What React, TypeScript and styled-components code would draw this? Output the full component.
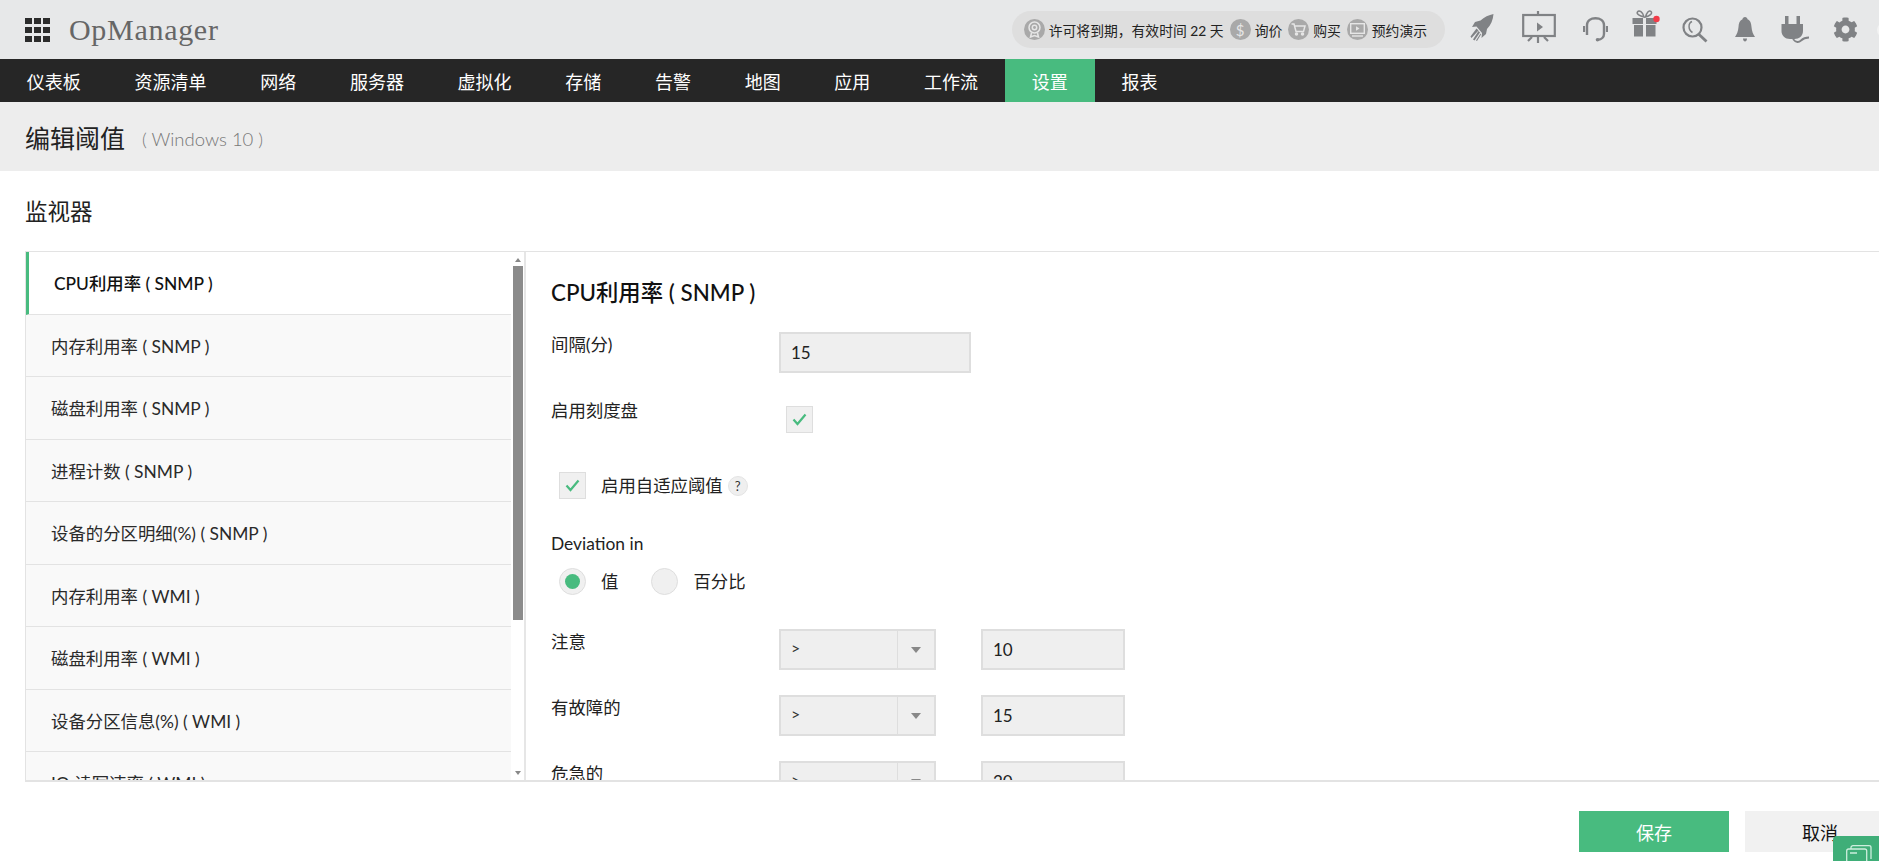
import React from 'react';
import styled, {createGlobalStyle} from 'styled-components';
import {FaCog} from 'react-icons/fa';

const GlobalStyle = createGlobalStyle`
  html, body {
    margin: 0;
    height: 100%;
    background: #fff;
    font-family: Lato, "Noto Sans CJK SC", sans-serif;
    color: #222;
  }
  #root {
    height: 100%;
  }
  * {
    box-sizing: border-box;
  }
`;

const GREEN = '#48bb7f';
const ICON = '#808285';

const Page = styled.div`
  height: 100vh;
  display: flex;
  flex-direction: column;
  overflow: hidden;
  position: relative;
`;

const TopBar = styled.header`
  height: 59px;
  flex: none;
  display: flex;
  align-items: center;
  padding-left: 25px;
  background: #e7e8e9;
`;

const Apps = styled.div`
  width: 25px;
  height: 24px;
  display: grid;
  grid-template-columns: repeat(3, 7px);
  grid-auto-rows: 6px;
  gap: 3px 2px;
  span {
    background: #2b2b2b;
  }
`;

const Brand = styled.div`
  margin-left: 19px;
  font-family: "Liberation Serif", serif;
  font-size: 30px;
  letter-spacing: 0.7px;
  color: #666;
`;

const Pill = styled.div`
  margin-left: auto;
  height: 37px;
  padding: 0 18px 0 12px;
  display: flex;
  align-items: center;
  border-radius: 19px;
  background: #dedede;
  font-size: 13.8px;
  color: #222;
  span + i {
    margin-left: 6px;
  }
`;

const Badge = styled.i`
  width: 21px;
  height: 21px;
  margin-right: 4px;
  display: flex;
  align-items: center;
  justify-content: center;
  border-radius: 50%;
  background: #a9a9a9;
  font-style: normal;
  font-size: 15px;
  color: #e6e6e6;
`;

const Tools = styled.div`
  margin-left: 25px;
  display: flex;
  align-items: center;
`;

const Tool = styled.div<{$left?: number; $shift?: number}>`
  margin-left: ${p => p.$left ?? 0}px;
  display: flex;
  transform: translateY(${p => p.$shift ?? 0}px);
  color: ${ICON};
`;

const Avatar = styled.div`
  width: 30px;
  height: 14px;
  flex: none;
  margin: 0 -28px 0 19px;
  border-radius: 7px;
  background: #f3f3f3;
`;

const Nav = styled.nav`
  height: 43px;
  flex: none;
  display: flex;
  background: #262626;
`;

const NavItem = styled.a<{$active?: boolean}>`
  padding: 0 26.85px;
  display: flex;
  align-items: center;
  font-size: 18px;
  color: #fff;
  background: ${p => (p.$active ? GREEN : 'transparent')};
`;

const TitleBand = styled.div`
  height: 69px;
  flex: none;
  padding-left: 25px;
  display: flex;
  align-items: center;
  background: #ededed;
`;

const PageTitle = styled.h1`
  margin: 0;
  font-size: 25px;
  font-weight: 400;
  color: #222;
`;

const DeviceName = styled.span`
  margin-left: 17px;
  padding-top: 4px;
  font-size: 18.5px;
  font-weight: 300;
  color: #777;
`;

const SectionTitle = styled.h2`
  height: 80px;
  flex: none;
  margin: 0;
  padding: 0 0 2px 25px;
  display: flex;
  align-items: center;
  font-size: 22.5px;
  font-weight: 400;
  color: #222;
`;

const Panel = styled.section`
  height: 531px;
  flex: none;
  margin-left: 25px;
  display: flex;
  overflow: hidden;
  border: 1px solid #e3e3e3;
  border-width: 1px 0 2px 1px;
`;

const Side = styled.div`
  width: 500px;
  flex: none;
  display: flex;
  border-right: 2px solid #e6e6e6;
`;

const MonitorList = styled.ul`
  flex: 1;
  margin: 0;
  padding: 0;
  list-style: none;
  overflow: hidden;
`;

const MonitorRow = styled.li<{$active?: boolean}>`
  height: 62.5px;
  display: flex;
  align-items: center;
  padding-left: 25px;
  border-bottom: 1.5px solid #e3e3e3;
  border-left: ${p => (p.$active ? `3px solid ${GREEN}` : '0')};
  background: ${p => (p.$active ? '#fff' : '#f9f9f9')};
  font-size: 17.4px;
  font-weight: ${p => (p.$active ? 500 : 400)};
  color: ${p => (p.$active ? '#111' : '#2a2a2a')};
`;

const ScrollTrack = styled.div`
  width: 13px;
  flex: none;
  display: flex;
  flex-direction: column;
  align-items: center;
  padding: 6px 0 5px;
`;

const ScrollArrow = styled.div<{$down?: boolean}>`
  width: 0;
  height: 0;
  border-left: 3.5px solid transparent;
  border-right: 3.5px solid transparent;
  border-${p => (p.$down ? 'top' : 'bottom')}: 4px solid #888;
  margin-top: ${p => (p.$down ? 'auto' : '0')};
`;

const ScrollThumb = styled.div`
  width: 10px;
  height: 354px;
  margin-top: 4px;
  background: #8b8b8b;
`;

const Detail = styled.div`
  flex: 1;
  padding: 27px 0 0 25px;
  overflow: hidden;
`;

const DetailTitle = styled.h3`
  margin: 0 0 25px;
  font-size: 22.4px;
  line-height: 28px;
  font-weight: 500;
  color: #111;
`;

const FieldRow = styled.div<{$top?: number}>`
  display: flex;
  align-items: flex-start;
  margin-top: ${p => p.$top ?? 0}px;
`;

const FieldLabel = styled.label`
  width: 228px;
  flex: none;
  font-size: 17.4px;
  line-height: 26px;
  color: #222;
`;

const TextInput = styled.input<{$width: number}>`
  width: ${p => p.$width}px;
  height: 41px;
  padding: 0 10px;
  border: 2px solid #dedede;
  border-radius: 0;
  background: #efefef;
  font-family: inherit;
  font-size: 17px;
  color: #222;
  outline: none;
`;

const Check = styled.span<{$indent: number; $top?: number}>`
  width: 27px;
  height: 27px;
  flex: none;
  margin-left: ${p => p.$indent}px;
  margin-top: ${p => p.$top ?? 0}px;
  display: flex;
  align-items: center;
  justify-content: center;
  border: 1.5px solid #dedede;
  background: #f0f0f0;
`;

const OptionText = styled.span`
  margin-left: 15px;
  font-size: 17.4px;
  line-height: 27px;
  color: #222;
`;

const Help = styled.span`
  width: 20px;
  height: 20px;
  margin: 4px 0 0 5px;
  display: flex;
  align-items: center;
  justify-content: center;
  border: 1px solid #e4e4e4;
  border-radius: 50%;
  background: #efefef;
  font-size: 13px;
  color: #333;
`;

const Caption = styled.div`
  margin-top: 32px;
  font-size: 17.4px;
  line-height: 26px;
  color: #222;
`;

const Radio = styled.span<{$first?: boolean}>`
  width: 27px;
  height: 27px;
  flex: none;
  margin-left: ${p => (p.$first ? '8px' : '33px')};
  display: flex;
  align-items: center;
  justify-content: center;
  border: 1px solid #dedede;
  border-radius: 50%;
  background: #f0f0f0;
  i {
    width: 15px;
    height: 15px;
    border-radius: 50%;
    background: ${GREEN};
  }
`;

const SelectBox = styled.div`
  width: 157px;
  height: 41px;
  flex: none;
  display: flex;
  border: 2px solid #dedede;
  background: #efefef;
`;

const SelectValue = styled.div`
  width: 117px;
  padding: 0 0 4px 10px;
  display: flex;
  align-items: center;
  border-right: 1.5px solid #dedede;
  font-size: 16px;
  color: #333;
`;

const SelectCaret = styled.div`
  flex: 1;
  display: flex;
  align-items: center;
  justify-content: center;
  &::after {
    content: '';
    border-left: 5px solid transparent;
    border-right: 5px solid transparent;
    border-top: 6px solid #888;
  }
`;

const ThresholdInput = styled(TextInput)`
  margin-left: 45px;
`;

const Footer = styled.footer`
  flex: 1;
  display: flex;
  justify-content: flex-end;
  align-items: flex-start;
  gap: 16px;
  padding-top: 29px;
  margin-right: -16px;
`;

const Button = styled.button<{$primary?: boolean}>`
  width: 150px;
  height: 41px;
  flex: none;
  padding: 0;
  border: 0;
  background: ${p => (p.$primary ? GREEN : '#f1f1f1')};
  font-family: inherit;
  font-size: 18px;
  color: ${p => (p.$primary ? '#fff' : '#111')};
`;

const ChatTab = styled.div`
  position: absolute;
  right: 0;
  bottom: 0;
  width: 46px;
  height: 25px;
  padding: 9px 0 0 13px;
  overflow: hidden;
  border-top-left-radius: 4px;
  background: #3fae78;
`;

const navItems = ['仪表板', '资源清单', '网络', '服务器', '虚拟化', '存储', '告警', '地图', '应用', '工作流', '设置', '报表'];

const monitors = [
  'CPU利用率 ( SNMP )',
  '内存利用率 ( SNMP )',
  '磁盘利用率 ( SNMP )',
  '进程计数 ( SNMP )',
  '设备的分区明细(%) ( SNMP )',
  '内存利用率 ( WMI )',
  '磁盘利用率 ( WMI )',
  '设备分区信息(%) ( WMI )',
  'IO 读写速率 ( WMI )',
];

const thresholds = [
  {label: '注意', value: '10', top: 34},
  {label: '有故障的', value: '15', top: 25},
  {label: '危急的', value: '20', top: 25},
];

const CheckMark = () => (
  <svg width="15" height="13" viewBox="0 0 15 13" fill="none" stroke={GREEN} strokeWidth="2.2">
    <path d="M1.5 6.5 5.5 11 13.5 1.5" />
  </svg>
);

const RocketIcon = () => (
  <svg width="25" height="27" viewBox="0 0 25 27" fill="currentColor">
    <path d="M23.5 0C19 1 14 3 10.5 6.5L5 8 2 13 6.5 12.5 12 19 11.5 24 16 20 17 15C21 11 23 6 23.5 0Z" />
    <path d="M6.5 14.5 8.5 16.5 1.5 24 0.5 22.5ZM8.5 17 10 18.5 4.5 26.5 3 25.5ZM10.5 19.5 11 20.5 7 27 6 26.5Z" />
  </svg>
);

const ScreenIcon = () => (
  <svg width="34" height="32" viewBox="0 0 34 32" fill="none" stroke="currentColor" strokeWidth="2.2">
    <rect x="1.2" y="4" width="31.6" height="21" />
    <path d="M16 0v4M16 25v7M10 26l-4 4M22 26l4 4" />
    <path d="M15 11.5 21 16 15 20.5Z" fill="currentColor" stroke="none" />
  </svg>
);

const HeadsetIcon = () => (
  <svg width="25" height="25" viewBox="0 0 25 25" fill="none" stroke="currentColor" strokeWidth="2.4">
    <path d="M4 18V8C4 3.5 8 1.2 12.5 1.2S21 3.5 21 8V17C21 20 18.5 22.5 15 22.8" />
    <path d="M1 9v6M24 9v6" strokeWidth="2.2" />
    <circle cx="14.5" cy="22.8" r="1.8" fill="currentColor" stroke="none" />
  </svg>
);

const GiftIcon = () => (
  <svg width="29" height="28" viewBox="0 0 29 28">
    <g fill="none" stroke={ICON} strokeWidth="1.5">
      <path d="M12 8C8 7 4 5 5.5 2.8S11 3 12 8ZM13.5 8C14.5 4 17 0.5 19 2.5S17.5 7 13.5 8Z" />
    </g>
    <g fill={ICON}>
      <rect x="0.5" y="9" width="10.5" height="6" />
      <rect x="14" y="9" width="10.5" height="6" />
      <rect x="2" y="16" width="9" height="11.5" />
      <rect x="14" y="16" width="9.5" height="11.5" />
    </g>
    <circle cx="24.5" cy="10" r="3.2" fill="#f23b48" />
  </svg>
);

const SearchIcon = () => (
  <svg width="26" height="26" viewBox="0 0 26 26" fill="none" stroke="currentColor">
    <circle cx="10.5" cy="10.5" r="9" strokeWidth="2.2" />
    <path d="M16.5 17 24.5 24.5" strokeWidth="2.8" />
    <path d="M10 4.5C6 6 6 13 10.5 15.5" strokeWidth="1.5" />
  </svg>
);

const BellIcon = () => (
  <svg width="20" height="25" viewBox="0 0 20 25" fill="currentColor">
    <path d="M10 0C11.5 0 12.3 1 12.5 2.2 15.5 3.5 16.3 6.5 16.5 10 16.8 14 18 17 20 20H0C2 17 3.2 14 3.5 10 3.7 6.5 4.5 3.5 7.5 2.2 7.7 1 8.5 0 10 0Z" />
    <path d="M8 21.5h4C12 23.5 11 24.5 10 24.5S8 23.5 8 21.5Z" />
  </svg>
);

const PlugIcon = () => (
  <svg width="28" height="27" viewBox="0 0 28 27" fill="currentColor">
    <rect x="4" y="0" width="3.5" height="8" />
    <rect x="15.5" y="0" width="3.5" height="8" />
    <path d="M0.5 8H22V15C22 20 18 23 13.5 23H9C4 23 0.5 19.5 0.5 15Z" />
    <path d="M12 23C15 27 18 26.5 20 24.5S25 21.5 28 21.5" fill="none" stroke="currentColor" strokeWidth="1.8" />
  </svg>
);

const AwardGlyph = () => (
  <svg width="15" height="17" viewBox="0 0 15 17" fill="none" stroke="#e6e6e6" strokeWidth="1.5">
    <circle cx="7.5" cy="6.5" r="5.5" />
    <circle cx="7.5" cy="6.5" r="2.2" />
    <path d="M4.5 12 3.5 16 7.5 14.5 11.5 16 10.5 12" />
  </svg>
);

const CartGlyph = () => (
  <svg width="15" height="13" viewBox="0 0 15 13" fill="none" stroke="#e6e6e6" strokeWidth="1.5">
    <path d="M0.5 1H3L5 8.5H12.5L14 3H3.5" />
    <circle cx="5.5" cy="11" r="1" fill="#e6e6e6" />
    <circle cx="11.5" cy="11" r="1" fill="#e6e6e6" />
  </svg>
);

const VideoGlyph = () => (
  <svg width="15" height="14" viewBox="0 0 15 14" fill="none" stroke="#e6e6e6" strokeWidth="1.4">
    <rect x="0.7" y="0.7" width="13.6" height="9.6" />
    <path d="M6 3.2 9.5 5.5 6 7.8Z" fill="#e6e6e6" stroke="none" />
    <path d="M2 13h11" />
  </svg>
);

const ChatGlyph = () => (
  <svg width="26" height="20" viewBox="0 0 26 20" fill="none" stroke="#cdeedd" strokeWidth="1.3">
    <path d="M5 4V2.5C5 1.4 5.9 0.7 7 0.7H23C24.1 0.7 25 1.4 25 2.5V14" />
    <rect x="0.7" y="4" width="20" height="16" rx="2" />
    <path d="M4 8h7" />
  </svg>
);

function App() {
  return (
    <Page>
      <GlobalStyle />
      <TopBar>
        <Apps>
          {Array.from({length: 9}).map((_, i) => (
            <span key={i} />
          ))}
        </Apps>
        <Brand>OpManager</Brand>
        <Pill>
          <Badge>
            <AwardGlyph />
          </Badge>
          <span>许可将到期，有效时间 22 天</span>
          <Badge>$</Badge>
          <span>询价</span>
          <Badge>
            <CartGlyph />
          </Badge>
          <span>购买</span>
          <Badge>
            <VideoGlyph />
          </Badge>
          <span>预约演示</span>
        </Pill>
        <Tools>
          <Tool $shift={-2}>
            <RocketIcon />
          </Tool>
          <Tool $left={27} $shift={-3}>
            <ScreenIcon />
          </Tool>
          <Tool $left={27}>
            <HeadsetIcon />
          </Tool>
          <Tool $left={24} $shift={-7}>
            <GiftIcon />
          </Tool>
          <Tool $left={21}>
            <SearchIcon />
          </Tool>
          <Tool $left={27}>
            <BellIcon />
          </Tool>
          <Tool $left={26}>
            <PlugIcon />
          </Tool>
          <Tool $left={24}>
            <FaCog size={25} />
          </Tool>
          <Avatar />
        </Tools>
      </TopBar>

      <Nav>
        {navItems.map(item => (
          <NavItem key={item} $active={item === '设置'}>
            {item}
          </NavItem>
        ))}
      </Nav>

      <TitleBand>
        <PageTitle>编辑阈值</PageTitle>
        <DeviceName>( Windows 10 )</DeviceName>
      </TitleBand>

      <SectionTitle>监视器</SectionTitle>

      <Panel>
        <Side>
          <MonitorList>
            {monitors.map((m, i) => (
              <MonitorRow key={m} $active={i === 0}>
                {m}
              </MonitorRow>
            ))}
          </MonitorList>
          <ScrollTrack>
            <ScrollArrow />
            <ScrollThumb />
            <ScrollArrow $down />
          </ScrollTrack>
        </Side>

        <Detail>
          <DetailTitle>CPU利用率 ( SNMP )</DetailTitle>

          <FieldRow>
            <FieldLabel>间隔(分)</FieldLabel>
            <TextInput $width={192} readOnly value="15" />
          </FieldRow>

          <FieldRow $top={25}>
            <FieldLabel>启用刻度盘</FieldLabel>
            <Check $indent={7} $top={8}>
              <CheckMark />
            </Check>
          </FieldRow>

          <FieldRow $top={39}>
            <Check $indent={8}>
              <CheckMark />
            </Check>
            <OptionText>启用自适应阈值</OptionText>
            <Help>?</Help>
          </FieldRow>

          <Caption>Deviation in</Caption>

          <FieldRow $top={11}>
            <Radio $first>
              <i />
            </Radio>
            <OptionText>值</OptionText>
            <Radio />
            <OptionText>百分比</OptionText>
          </FieldRow>

          {thresholds.map(t => (
            <FieldRow key={t.label} $top={t.top}>
              <FieldLabel>{t.label}</FieldLabel>
              <SelectBox>
                <SelectValue>&gt;</SelectValue>
                <SelectCaret />
              </SelectBox>
              <ThresholdInput $width={144} readOnly value={t.value} />
            </FieldRow>
          ))}
        </Detail>
      </Panel>

      <Footer>
        <Button $primary>保存</Button>
        <Button>取消</Button>
      </Footer>

      <ChatTab>
        <ChatGlyph />
      </ChatTab>
    </Page>
  );
}

export default App;
